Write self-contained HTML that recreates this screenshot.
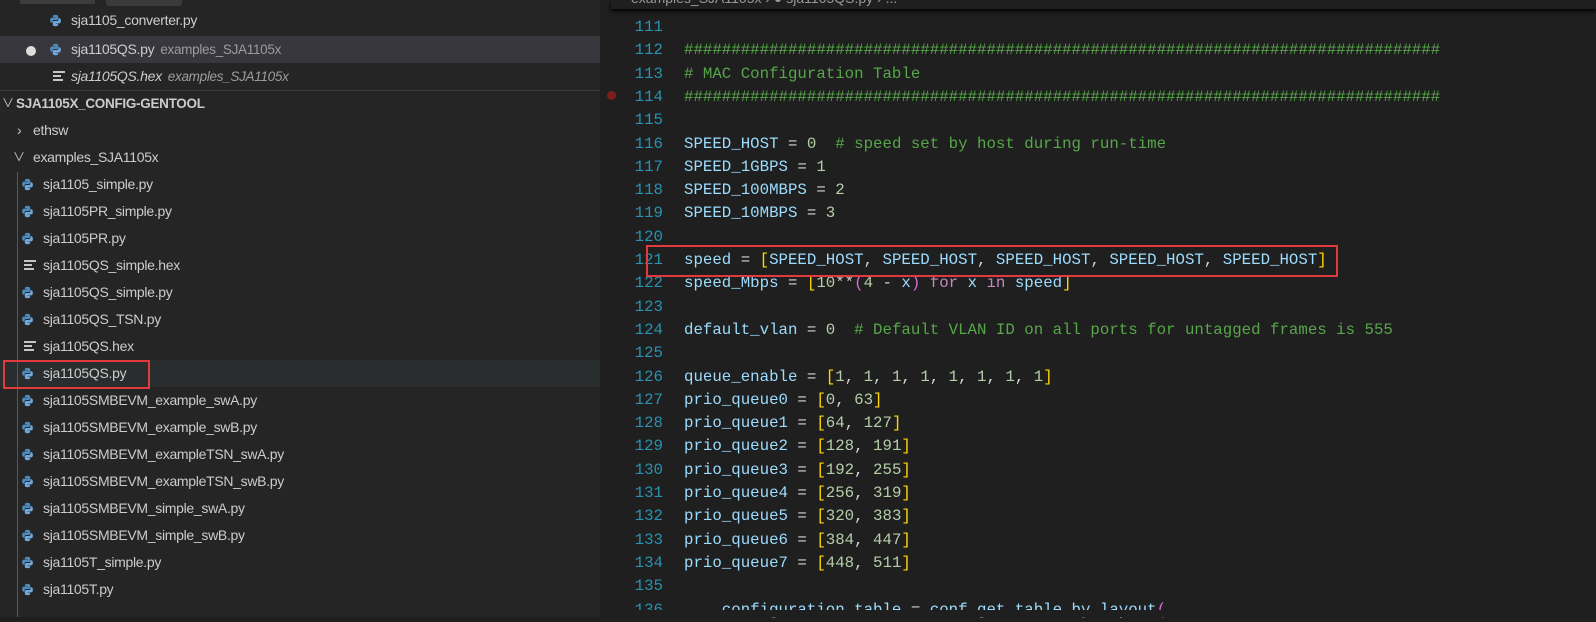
<!DOCTYPE html>
<html><head><meta charset="utf-8"><style>
*{margin:0;padding:0;box-sizing:border-box}
body{width:1596px;height:617px;overflow:hidden;background:#1f1f1f;position:relative;font-family:"Liberation Sans","Noto Sans CJK SC",sans-serif}
#side{position:absolute;left:0;top:0;width:600px;height:617px;background:#252526}
.row{position:absolute;left:0;width:600px;height:27px;line-height:27px;font-size:14px;letter-spacing:-0.3px;color:#cccccc;white-space:nowrap}
.row .t{position:absolute}
.py{position:absolute;top:7px;width:13px;height:13px}
.hex{position:absolute;top:8px;width:12px;height:11px}
.hex i{display:block;height:2px;background:#c5c5c5;margin-bottom:2px}
.desc{color:#9d9d9d;font-size:13.5px;margin-left:6px}
#ed{position:absolute;left:611px;top:0;right:0;bottom:0;background:#1f1f1f}
.ln{position:absolute;left:611px;width:52px;text-align:right;font-family:"Liberation Mono",monospace;font-size:15.75px;color:#2b91af;height:23px;line-height:23px}
.cl{position:absolute;left:684px;font-family:"Liberation Mono",monospace;font-size:15.75px;color:#d4d4d4;white-space:pre;height:23px;line-height:23px}
.v{color:#9cdcfe}.n{color:#b5cea8}.c{color:#57a64a}.b{color:#ffd700}.p{color:#da70d6}.k{color:#c586c0}
</style></head><body>
<div id="side">
<div style="position:absolute;left:20px;top:-6px;width:75px;height:10px;background:#555;opacity:.5"></div>
<div style="position:absolute;left:106px;top:-6px;width:76px;height:12px;background:#3a3a3a;border-radius:3px"></div>
<div class="row" style="top:36px;background:#37373d"></div>
<div style="position:absolute;left:0;top:90px;width:600px;height:1px;background:#3c3c3c"></div>
<div class="row" style="top:360px;background:#2a2d2e"></div>
<div style="position:absolute;left:17px;top:172px;width:1px;height:445px;background:#585858"></div>
</div>
<div id="rows"></div>
<div style="position:absolute;left:3px;top:360px;width:147px;height:29px;border:2px solid #e0393e"></div>
<div id="ed"></div>
<div style="position:absolute;left:611px;top:0;right:0;height:9px;background:#1f1f1f;box-shadow:0 2px 4px #000"></div>
<div style="position:absolute;left:611px;top:0;width:350px;height:9px;overflow:hidden"><div style="color:#999;font-size:14px;margin-top:-10px;padding-left:20px">examples_SJA1105x › ● sja1105QS.py › ...</div></div>
<div style="position:absolute;left:607px;top:91px;width:9px;height:9px;border-radius:50%;background:#7a1e1e"></div>
<div id="code"></div>
<div style="position:absolute;left:611px;top:610px;right:0;height:7px;background:#1f1f1f"></div>
<div style="position:absolute;left:646px;top:245px;width:692px;height:32px;border:2px solid #e0393e"></div>
<script>
function py(x){return '<svg class="py" style="left:'+x+'px" viewBox="0 0 16 16"><path d="M7.9 1C4.6 1 4.8 2.4 4.8 2.4V4h3.2v.5H3.5S1.4 4.3 1.4 7.6s1.9 3.2 1.9 3.2h1.1V9.3s-.1-1.9 1.9-1.9h3.2s1.8 0 1.8-1.8V2.7S11.6 1 7.9 1z" fill="#4b8bbe"/><path d="M8.1 15c3.3 0 3.1-1.4 3.1-1.4V12H8v-.5h4.5s2.1.2 2.1-3.1-1.9-3.2-1.9-3.2h-1.1v1.5s.1 1.9-1.9 1.9H6.5s-1.8 0-1.8 1.8v2.9S4.4 15 8.1 15z" fill="#6fa8dc"/></svg>';}
function hex(x){return '<span class="hex" style="left:'+x+'px"><i></i><i style="width:8px"></i><i style="width:10px"></i></span>';}
var R=[
[7,py(49),71,'sja1105_converter.py'],
[36,py(49)+'<span style="position:absolute;left:26px;top:10px;width:10px;height:10px;border-radius:50%;background:#ddd"></span>',71,'sja1105QS.py<span class="desc">examples_SJA1105x</span>'],
[63,hex(53),71,'<i>sja1105QS.hex</i><span class="desc"><i>examples_SJA1105x</i></span>'],
[90,'<span style="position:absolute;left:2px;color:#ccc;font-size:12px">&#x2228;</span>',16,'<b style="font-size:13.5px">SJA1105X_CONFIG-GENTOOL</b>'],
[117,'<span style="position:absolute;left:17px;color:#ccc">&#x203A;</span>',33,'ethsw'],
[144,'<span style="position:absolute;left:13px;color:#ccc;font-size:12px">&#x2228;</span>',33,'examples_SJA1105x']];
var f=['sja1105_simple.py','sja1105PR_simple.py','sja1105PR.py','sja1105QS_simple.hex','sja1105QS_simple.py','sja1105QS_TSN.py','sja1105QS.hex','sja1105QS.py','sja1105SMBEVM_example_swA.py','sja1105SMBEVM_example_swB.py','sja1105SMBEVM_exampleTSN_swA.py','sja1105SMBEVM_exampleTSN_swB.py','sja1105SMBEVM_simple_swA.py','sja1105SMBEVM_simple_swB.py','sja1105T_simple.py','sja1105T.py'];
f.forEach(function(n,i){R.push([171+27*i,(/hex$/.test(n)?hex(24):py(21)),43,n]);});
var h='';R.forEach(function(r){h+='<div class="row" style="top:'+r[0]+'px;background:transparent">'+r[1]+'<span class="t" style="left:'+r[2]+'px">'+r[3]+'</span></div>';});
document.getElementById('rows').innerHTML=h;
var H='#'.repeat(80);
var L={111:'',112:'<span class="c">'+H+'</span>',113:'<span class="c"># MAC Configuration Table</span>',114:'<span class="c">'+H+'</span>',115:'',
116:'<span class="v">SPEED_HOST</span> = <span class="n">0</span>  <span class="c"># speed set by host during run-time</span>',
117:'<span class="v">SPEED_1GBPS</span> = <span class="n">1</span>',118:'<span class="v">SPEED_100MBPS</span> = <span class="n">2</span>',119:'<span class="v">SPEED_10MBPS</span> = <span class="n">3</span>',120:'',
121:'<span class="v">speed</span> = <span class="b">[</span><span class="v">SPEED_HOST</span>, <span class="v">SPEED_HOST</span>, <span class="v">SPEED_HOST</span>, <span class="v">SPEED_HOST</span>, <span class="v">SPEED_HOST</span><span class="b">]</span>',
122:'<span class="v">speed_Mbps</span> = <span class="b">[</span><span class="n">10</span>**<span class="p">(</span><span class="n">4</span> - <span class="v">x</span><span class="p">)</span> <span class="k">for</span> <span class="v">x</span> <span class="k">in</span> <span class="v">speed</span><span class="b">]</span>',123:'',
124:'<span class="v">default_vlan</span> = <span class="n">0</span>  <span class="c"># Default VLAN ID on all ports for untagged frames is 555</span>',125:'',
126:'<span class="v">queue_enable</span> = <span class="b">[</span><span class="n">1</span>, <span class="n">1</span>, <span class="n">1</span>, <span class="n">1</span>, <span class="n">1</span>, <span class="n">1</span>, <span class="n">1</span>, <span class="n">1</span><span class="b">]</span>',135:'',
136:'<span class="v">    configuration_table</span> = <span class="v">conf.get_table_by_layout</span><span class="p">(</span>'};
var q=[[0,63],[64,127],[128,191],[192,255],[256,319],[320,383],[384,447],[448,511]];
q.forEach(function(a,i){L[127+i]='<span class="v">prio_queue'+i+'</span> = <span class="b">[</span><span class="n">'+a[0]+'</span>, <span class="n">'+a[1]+'</span><span class="b">]</span>';});
var c='';
for(var k=111;k<=136;k++){var y=16+(k-111)*23.3;c+='<div class="ln" style="top:'+y+'px">'+k+'</div><div class="cl" style="top:'+y+'px">'+L[k]+'</div>';}
document.getElementById('code').innerHTML=c;
</script>
</body></html>
